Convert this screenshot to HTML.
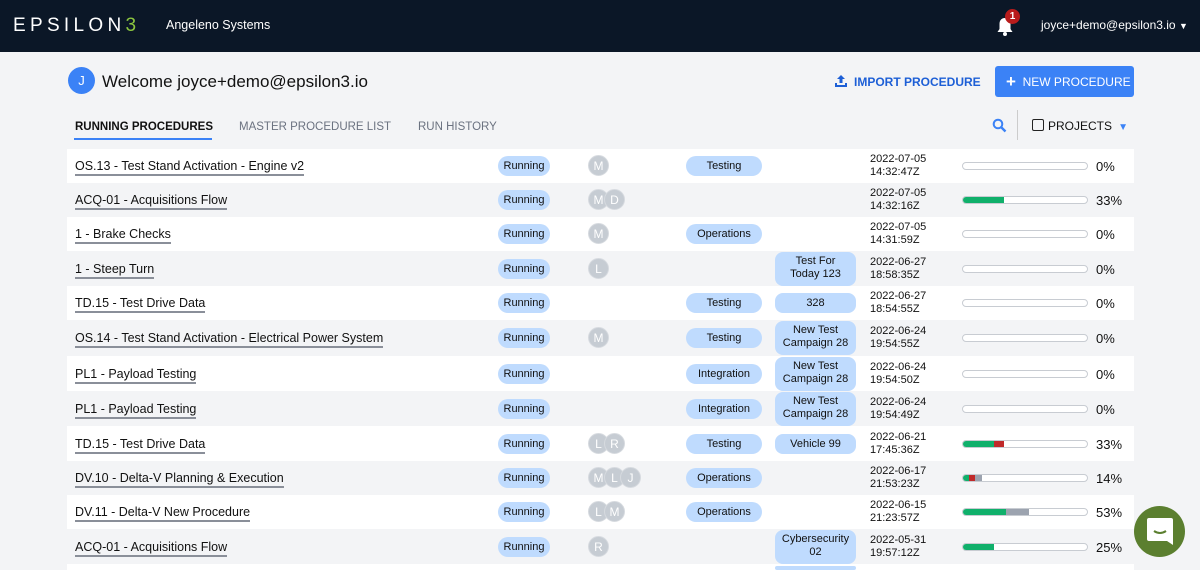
<!DOCTYPE html><html><head><style>
*{box-sizing:border-box;margin:0;padding:0}
body{width:1200px;height:570px;overflow:hidden;background:#f3f4f6;font-family:"Liberation Sans",sans-serif;color:#111;position:relative}
.top{position:absolute;left:0;top:0;width:1200px;height:52px;background:#0b1727;color:#fff}
.a{position:absolute;white-space:nowrap}
.r{position:absolute;left:67px;width:1067px}
.r.w{background:#fff}
.r.g{background:#f3f4f6}
.n{position:absolute;left:8px;font-size:12.5px;border-bottom:2px solid #8a8f99;line-height:15px;white-space:nowrap}
.p{position:absolute;background:#bfdbfe;border-radius:10px;font-size:11px;text-align:center;height:20px;line-height:20px}
.run{left:431px;width:52px}
.t1{left:619px;width:76px}
.t2{left:708px;width:81px;border-radius:8px;line-height:13px;padding-top:3px;height:34px}
.t2.s{height:20px;line-height:20px;padding-top:0}
.av{position:absolute;width:21px;height:21px;border-radius:50%;background:#c6ccd3;color:#fff;font-size:12px;text-align:center;line-height:21px;border:1px solid #d6dadf}
.d{position:absolute;left:803px;font-size:11px;line-height:13px}
.bar{position:absolute;left:895px;width:126px;height:8px;border:1px solid #c8ccd2;border-radius:5px;background:#fff;overflow:hidden}
.bar i{display:block;float:left;height:100%}
.pc{position:absolute;left:1029px;font-size:13px}
</style></head><body>
<div class="top">
<div class="a" style="left:13px;top:15px;font-size:19px;letter-spacing:4.3px">EPSILON<span style="color:#8cc63f">3</span></div>
<div class="a" style="left:166px;top:18px;font-size:12.5px">Angeleno Systems</div>
<svg class="a" style="left:996px;top:17px" width="18" height="20" viewBox="0 0 18 20"><path d="M9 1C5 1 3.5 4 3.5 7v5L1.5 15h15l-2-3V7C14.5 4 13 1 9 1z" fill="#fff"/><circle cx="9" cy="17" r="2" fill="#fff"/></svg>
<div class="a" style="left:1005px;top:9px;width:15px;height:15px;border-radius:50%;background:#b91c1c;font-size:10px;text-align:center;line-height:15px;font-weight:bold">1</div>
<div class="a" style="left:1041px;top:18px;font-size:12px">joyce+demo@epsilon3.io <span style="font-size:9px">▼</span></div>
</div>
<div class="a" style="left:68px;top:67px;width:27px;height:27px;border-radius:50%;background:#3b82f6;color:#fff;text-align:center;line-height:27px;font-size:13px">J</div>
<div class="a" style="left:102px;top:72px;font-size:17px">Welcome joyce+demo@epsilon3.io</div>
<svg class="a" style="left:834px;top:74px" width="14" height="14" viewBox="0 0 14 14"><path d="M7 1L3 5h2.5v4h3V5H11z M1 9v4h12V9h-2v2H3V9z" fill="#1d5fd6"/></svg>
<div class="a" style="left:854px;top:75px;font-size:12px;font-weight:bold;color:#1d5fd6">IMPORT PROCEDURE</div>
<div class="a" style="left:995px;top:66px;width:139px;height:31px;background:#3b82f6;border-radius:3px;color:#fff;font-size:12px;line-height:31px;padding-left:11px"><b style="font-size:17px;vertical-align:-1px">+</b>&nbsp; NEW PROCEDURE</div>
<div class="a" style="left:75px;top:121px;font-size:11.5px;font-weight:bold">RUNNING PROCEDURES</div>
<div class="a" style="left:74px;top:138px;width:138px;height:2px;background:#3b82f6"></div>
<div class="a" style="left:239px;top:121px;font-size:11.5px;color:#6b7280">MASTER PROCEDURE LIST</div>
<div class="a" style="left:418px;top:121px;font-size:11.5px;color:#6b7280">RUN HISTORY</div>
<svg class="a" style="left:992px;top:118px" width="15" height="15" viewBox="0 0 15 15"><circle cx="6" cy="6" r="4.3" fill="none" stroke="#3b82f6" stroke-width="2"/><path d="M9 9l4.5 4.5" stroke="#3b82f6" stroke-width="2.4"/></svg>
<div class="a" style="left:1017px;top:110px;width:1px;height:30px;background:#ccc"></div>
<div class="a" style="left:1032px;top:119px;width:12px;height:12px;border:1.5px solid #222;border-radius:2px"></div>
<div class="a" style="left:1048px;top:119px;font-size:12px">PROJECTS <span style="color:#3b82f6;font-size:10px">&nbsp;▼</span></div>

<div class="r w" style="top:149px;height:34px"><div class="n" style="top:10px">OS.13 - Test Stand Activation - Engine v2</div><div class="p run" style="top:7px">Running</div><div class="av" style="left:521px;top:6px">M</div><div class="p t1" style="top:7px">Testing</div><div class="d" style="top:4px">2022-07-05<br>14:32:47Z</div><div class="bar" style="top:13px"></div><div class="pc" style="top:10px">0%</div></div>
<div class="r g" style="top:183px;height:34px"><div class="n" style="top:10px">ACQ-01 - Acquisitions Flow</div><div class="p run" style="top:7px">Running</div><div class="av" style="left:521px;top:6px">M</div><div class="av" style="left:537px;top:6px">D</div><div class="d" style="top:4px">2022-07-05<br>14:32:16Z</div><div class="bar" style="top:13px"><i style="width:33%;background:#10b06b"></i></div><div class="pc" style="top:10px">33%</div></div>
<div class="r w" style="top:217px;height:34px"><div class="n" style="top:10px">1 - Brake Checks</div><div class="p run" style="top:7px">Running</div><div class="av" style="left:521px;top:6px">M</div><div class="p t1" style="top:7px">Operations</div><div class="d" style="top:4px">2022-07-05<br>14:31:59Z</div><div class="bar" style="top:13px"></div><div class="pc" style="top:10px">0%</div></div>
<div class="r g" style="top:251px;height:35px"><div class="n" style="top:11px">1 - Steep Turn</div><div class="p run" style="top:8px">Running</div><div class="av" style="left:521px;top:7px">L</div><div class="p t2" style="top:1px">Test For<br>Today 123</div><div class="d" style="top:5px">2022-06-27<br>18:58:35Z</div><div class="bar" style="top:14px"></div><div class="pc" style="top:11px">0%</div></div>
<div class="r w" style="top:286px;height:34px"><div class="n" style="top:10px">TD.15 - Test Drive Data</div><div class="p run" style="top:7px">Running</div><div class="p t1" style="top:7px">Testing</div><div class="p t2 s" style="top:7px">328</div><div class="d" style="top:4px">2022-06-27<br>18:54:55Z</div><div class="bar" style="top:13px"></div><div class="pc" style="top:10px">0%</div></div>
<div class="r g" style="top:320px;height:36px"><div class="n" style="top:11px">OS.14 - Test Stand Activation - Electrical Power System</div><div class="p run" style="top:8px">Running</div><div class="av" style="left:521px;top:7px">M</div><div class="p t1" style="top:8px">Testing</div><div class="p t2" style="top:1px">New Test<br>Campaign 28</div><div class="d" style="top:5px">2022-06-24<br>19:54:55Z</div><div class="bar" style="top:14px"></div><div class="pc" style="top:11px">0%</div></div>
<div class="r w" style="top:356px;height:35px"><div class="n" style="top:11px">PL1 - Payload Testing</div><div class="p run" style="top:8px">Running</div><div class="p t1" style="top:8px">Integration</div><div class="p t2" style="top:1px">New Test<br>Campaign 28</div><div class="d" style="top:5px">2022-06-24<br>19:54:50Z</div><div class="bar" style="top:14px"></div><div class="pc" style="top:11px">0%</div></div>
<div class="r g" style="top:391px;height:35px"><div class="n" style="top:11px">PL1 - Payload Testing</div><div class="p run" style="top:8px">Running</div><div class="p t1" style="top:8px">Integration</div><div class="p t2" style="top:1px">New Test<br>Campaign 28</div><div class="d" style="top:5px">2022-06-24<br>19:54:49Z</div><div class="bar" style="top:14px"></div><div class="pc" style="top:11px">0%</div></div>
<div class="r w" style="top:426px;height:35px"><div class="n" style="top:11px">TD.15 - Test Drive Data</div><div class="p run" style="top:8px">Running</div><div class="av" style="left:521px;top:7px">L</div><div class="av" style="left:537px;top:7px">R</div><div class="p t1" style="top:8px">Testing</div><div class="p t2 s" style="top:8px">Vehicle 99</div><div class="d" style="top:5px">2022-06-21<br>17:45:36Z</div><div class="bar" style="top:14px"><i style="width:25%;background:#10b06b"></i><i style="width:8%;background:#c02a2a"></i></div><div class="pc" style="top:11px">33%</div></div>
<div class="r g" style="top:461px;height:34px"><div class="n" style="top:10px">DV.10 - Delta-V Planning &amp; Execution</div><div class="p run" style="top:7px">Running</div><div class="av" style="left:521px;top:6px">M</div><div class="av" style="left:537px;top:6px">L</div><div class="av" style="left:553px;top:6px">J</div><div class="p t1" style="top:7px">Operations</div><div class="d" style="top:4px">2022-06-17<br>21:53:23Z</div><div class="bar" style="top:13px"><i style="width:5%;background:#10b06b"></i><i style="width:5%;background:#c02a2a"></i><i style="width:5%;background:#9ca3af"></i></div><div class="pc" style="top:10px">14%</div></div>
<div class="r w" style="top:495px;height:34px"><div class="n" style="top:10px">DV.11 - Delta-V New Procedure</div><div class="p run" style="top:7px">Running</div><div class="av" style="left:521px;top:6px">L</div><div class="av" style="left:537px;top:6px">M</div><div class="p t1" style="top:7px">Operations</div><div class="d" style="top:4px">2022-06-15<br>21:23:57Z</div><div class="bar" style="top:13px"><i style="width:35%;background:#10b06b"></i><i style="width:18%;background:#9ca3af"></i></div><div class="pc" style="top:10px">53%</div></div>
<div class="r g" style="top:529px;height:35px"><div class="n" style="top:11px">ACQ-01 - Acquisitions Flow</div><div class="p run" style="top:8px">Running</div><div class="av" style="left:521px;top:7px">R</div><div class="p t2" style="top:1px">Cybersecurity<br>02</div><div class="d" style="top:5px">2022-05-31<br>19:57:12Z</div><div class="bar" style="top:14px"><i style="width:25%;background:#10b06b"></i></div><div class="pc" style="top:11px">25%</div></div>
<div class="r w" style="top:564px;height:6px"><div class="p t2" style="top:2px;height:4px"></div></div>

<div class="a" style="left:1134px;top:506px;width:51px;height:51px;border-radius:50%;background:#5b7f2f"></div>
<svg class="a" style="left:1145px;top:516px" width="30" height="32" viewBox="0 0 30 32"><path d="M4 2h22a2 2 0 0 1 2 2v25l-6-4H4a2 2 0 0 1-2-2V4a2 2 0 0 1 2-2z" fill="#fff"/><path d="M9 15q6 4 12 0" stroke="#5b7f2f" stroke-width="2" fill="none"/></svg>
</body></html>
